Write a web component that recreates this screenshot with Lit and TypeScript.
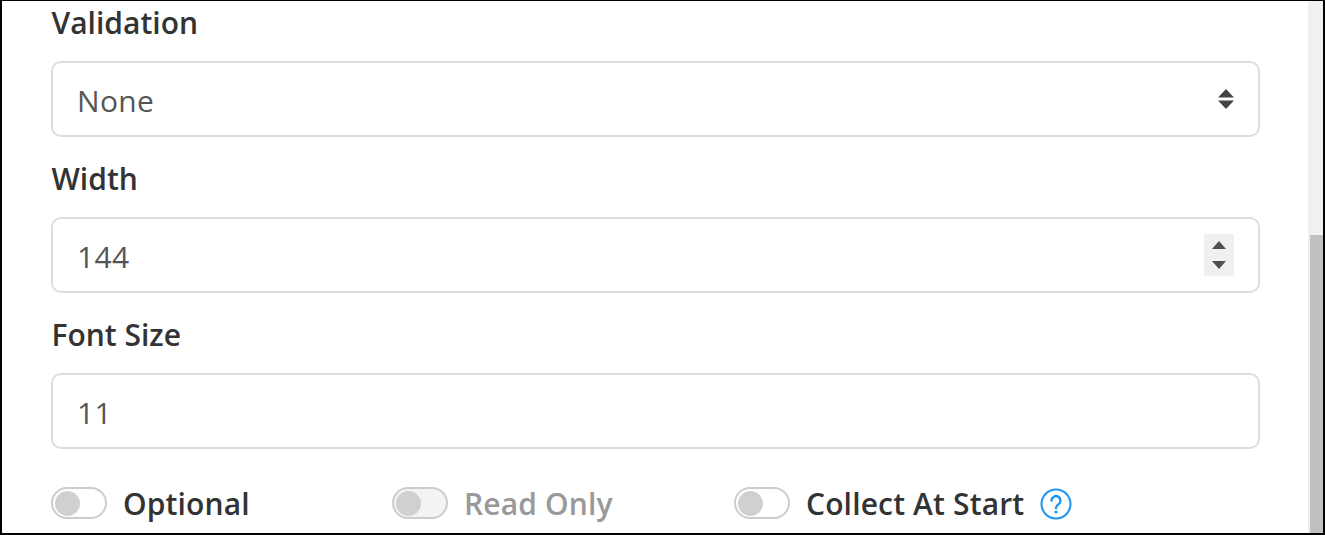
import { LitElement, html, css } from "lit";
import { customElement } from "lit/decorators.js";

@customElement("app-root")
export class AppRoot extends LitElement {
  static styles = css`
    :host {
      display: block;
      width: 1325px;
      height: 535px;
      box-sizing: border-box;
      border-style: solid;
      border-color: #000;
      border-width: 1px 2px 2px 2px;
      background: #fff;
      overflow: hidden;
      font-family: "Open Sans", "Noto Sans", sans-serif;
      color: #333;
    }
    .shell { display: flex; height: 100%; }
    .content {
      flex: 1;
      padding: 0 48px 0 49px;
      min-width: 0;
      display: flex;
      flex-direction: column;
    }
    label.title {
      display: block;
      font-size: 30px;
      font-weight: 600;
      line-height: 44px;
      color: #333;
      height: 60px;
      padding-left: 0.5px;
    }
    .box {
      box-sizing: border-box;
      height: 76px;
      border: 2px solid #ddd;
      border-radius: 10px;
      display: flex;
      align-items: center;
      padding: 0 24px;
      font-size: 30px;
      color: #555;
      margin-bottom: 20px;
    }
    .val { flex: 1; padding-top: 2px; letter-spacing: 0.3px; }
    .spin {
      width: 30px;
      height: 42px;
      background: #f0f0f0;
      display: flex;
      align-items: center;
      justify-content: center;
    }
    svg { display: block; }
    .toggles { display: flex; align-items: center; margin-top: 15px; }
    .tog { display: flex; align-items: center; }
    .sw {
      box-sizing: border-box;
      width: 56px;
      height: 32px;
      border: 2px solid #ccc;
      border-radius: 16px;
      padding: 1.5px;
      background: #fff;
      margin: 0 16px 2px 0;
    }
    .sw.dis { background: #f3f3f3; }
    .knob { width: 25px; height: 25px; border-radius: 50%; background: #d0d0d0; }
    .tx { font-size: 30px; font-weight: 600; line-height: 40px; color: #333; letter-spacing: 0.15px; }
    .tx.dis { color: #999; }
    .o { width: 341px; }
    .r { width: 342px; }
    .help { margin-left: 16px; }
    .gutter { width: 15px; background: #f0f0f0; display: flex; flex-direction: column; justify-content: flex-end; }
    .thumb { height: 298px; background: #c0c0c0; margin-left: 2px; }
  `;

  render() {
    return html`<div class="shell">
      <div class="content">
        <label class="title">Validation</label>
        <div class="box">
          <span class="val">None</span>
          <svg width="16" height="20" viewBox="0 0 16 20"><path d="M8 0L16 8.5H0Z M0 11.5H16L8 20Z" fill="#444"/></svg>
        </div>
        <label class="title">Width</label>
        <div class="box">
          <span class="val">144</span>
          <div class="spin">
            <svg width="14" height="28" viewBox="0 0 14 28"><path d="M7 0L14 8H0Z M0 20H14L7 28Z" fill="#505050"/></svg>
          </div>
        </div>
        <label class="title">Font Size</label>
        <div class="box"><span class="val">11</span></div>
        <div class="toggles">
          <div class="tog o"><div class="sw"><div class="knob"></div></div><span class="tx">Optional</span></div>
          <div class="tog r"><div class="sw dis"><div class="knob"></div></div><span class="tx dis">Read Only</span></div>
          <div class="tog">
            <div class="sw"><div class="knob"></div></div><span class="tx">Collect At Start</span>
            <svg class="help" width="32" height="32" viewBox="0 0 32 32" fill="none">
              <circle cx="16" cy="16" r="14.5" stroke="#1a94f0" stroke-width="2"/>
              <path d="M11.5 12.5a4.5 4.5 0 1 1 7 3.8c-1.6 1-2.5 1.8-2.5 3.7" stroke="#1a94f0" stroke-width="2.4" stroke-linecap="round"/>
              <circle cx="16" cy="24" r="1.6" fill="#1a94f0"/>
            </svg>
          </div>
        </div>
      </div>
      <div class="gutter"><div class="thumb"></div></div>
    </div>`;
  }
}
